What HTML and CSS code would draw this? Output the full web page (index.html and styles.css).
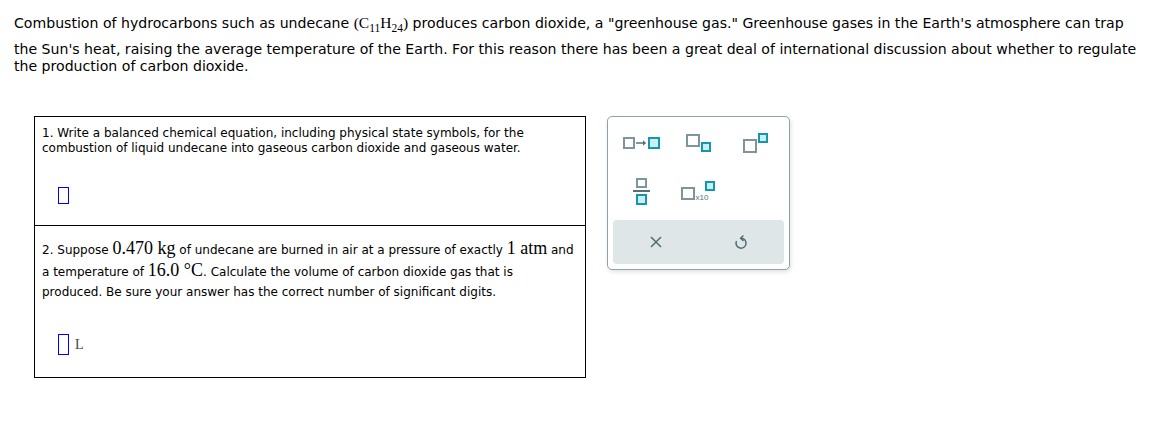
FILE: index.html
```html
<!DOCTYPE html>
<html>
<head>
<meta charset="utf-8">
<link rel="stylesheet" href="styles.css">
</head>
<body>
<p class="intro">Combustion of hydrocarbons such as undecane <span class="math">(C<sub>11</sub>H<sub>24</sub>)</span> produces carbon dioxide, a "greenhouse gas." Greenhouse gases in the Earth's atmosphere can trap the Sun's heat, raising the average temperature of the Earth. For this reason there has been a great deal of international discussion about whether to regulate the production of carbon dioxide.</p>
<div class="work">
  <div class="qbox">
    <div class="part part1">
      <p class="qtext">1. Write a balanced chemical equation, including physical state symbols, for the combustion of liquid undecane into gaseous carbon dioxide and gaseous water.</p>
      <div class="answer"><span class="input"></span></div>
    </div>
    <div class="part part2">
      <p class="qtext q2">2. Suppose <span class="m first">0.470 kg</span> of undecane are burned in air at a pressure of exactly <span class="m">1 atm</span> and a temperature of <span class="m">16.0 °C</span>. Calculate the volume of carbon dioxide gas that is<br>produced. Be sure your answer has the correct number of significant digits.</p>
      <div class="answer answer2"><span class="input tall"></span><span class="unit">L</span></div>
    </div>
  </div>
  <div class="palette">
    <div class="tools">
      <div class="tool">
        <svg width="37" height="12" viewBox="0 0 37 12"><rect x="1" y="1" width="10" height="10" fill="#fff" stroke="#7d959c" stroke-width="2"/><path d="M13 6h8" stroke="#56707a" stroke-width="1.5"/><path d="M20 3.3l3.2 2.7-3.2 2.7z" fill="#56707a"/><rect x="26" y="1" width="10" height="10" fill="#c9eef4" stroke="#1497ad" stroke-width="2"/></svg>
      </div>
      <div class="tool">
        <svg width="25" height="18" viewBox="0 0 25 18"><rect x="1" y="1" width="12" height="11" fill="#fff" stroke="#7d959c" stroke-width="2"/><rect x="16" y="9" width="8" height="8" fill="#c9eef4" stroke="#1497ad" stroke-width="2"/></svg>
      </div>
      <div class="tool">
        <svg width="25" height="20" viewBox="0 0 25 20"><rect x="1" y="7" width="12" height="12" fill="#fff" stroke="#7d959c" stroke-width="2"/><rect x="16" y="1" width="8" height="8" fill="#c9eef4" stroke="#1497ad" stroke-width="2"/></svg>
      </div>
      <div class="tool">
        <svg width="17" height="27" viewBox="0 0 17 27"><rect x="4" y="1" width="9" height="8" fill="#fff" stroke="#7d959c" stroke-width="2"/><path d="M0 13h17" stroke="#56707a" stroke-width="2"/><rect x="4" y="17" width="9" height="9" fill="#c9eef4" stroke="#1497ad" stroke-width="2"/></svg>
      </div>
      <div class="tool">
        <svg width="35" height="20" viewBox="0 0 35 20"><rect x="1" y="7" width="12" height="11" fill="#fff" stroke="#7d959c" stroke-width="2"/><text x="14.5" y="19" font-family="Liberation Sans, Arial, sans-serif" font-size="8" fill="#56707a">x10</text><rect x="25" y="1" width="8" height="8" fill="#c9eef4" stroke="#1497ad" stroke-width="2"/></svg>
      </div>
      <div class="tool"></div>
    </div>
    <div class="actions">
      <div class="action">
        <svg width="12" height="12" viewBox="0 0 12 12"><path d="M1 1L11 11M11 1L1 11" stroke="#4e6d76" stroke-width="1.5" fill="none"/></svg>
      </div>
      <div class="action">
        <svg width="14" height="15" viewBox="0 0 14 15"><path d="M7 3.2A5 5 0 1 1 2.3 6.6" stroke="#4e6d76" stroke-width="1.5" fill="none" stroke-linecap="round"/><path d="M9 1L6.6 3.2 9 5.4" stroke="#4e6d76" stroke-width="1.5" fill="none" stroke-linecap="round" stroke-linejoin="round"/></svg>
      </div>
    </div>
  </div>
</div>
</body>
</html>
```
FILE: styles.css
```css
html, body {
  margin: 0;
  padding: 0;
  background: #fff;
}
body {
  font-family: "DejaVu Sans", Verdana, sans-serif;
  color: #000;
}
.intro {
  margin: 0;
  padding: 15px 0 0 14px;
  width: 1130px;
  font-size: 14.1px;
  line-height: 17px;
}
.math {
  font-family: "Liberation Serif", "Times New Roman", serif;
  font-size: 15.5px;
  display: inline-block;
  line-height: 15px;
  vertical-align: baseline;
  padding: 0 0 11px;
}
.math sub {
  font-size: 11.5px;
  vertical-align: -4px;
  line-height: 0;
}
.work {
  display: flex;
  align-items: flex-start;
  gap: 21px;
  margin: 41px 0 0 34px;
}
.qbox {
  width: 550px;
  border: 1px solid #000;
}
.part {
  padding: 0 7px;
}
.part1 {
  padding-top: 9px;
  box-sizing: border-box;
  height: 109px;
  border-bottom: 1px solid #000;
}
.qtext {
  margin: 0;
  font-size: 12px;
  line-height: 15px;
}
.q2 {
  line-height: 20px;
}
.m {
  font-family: "Liberation Serif", "Times New Roman", serif;
  font-size: 18px;
  line-height: 16px;
  display: inline-block;
}
.m.first {
  padding-bottom: 6px;
}
.part2 {
  padding-top: 14px;
  height: 151px;
  box-sizing: border-box;
}
.answer {
  display: flex;
  align-items: center;
  margin: 31px 0 0 16px;
}
.answer2 {
  margin-top: 32px;
}
.input {
  display: block;
  width: 9px;
  height: 15px;
  border: 1px solid #0000ff;
}
.input.tall {
  height: 19px;
}
.unit {
  font-family: "Liberation Serif", "Times New Roman", serif;
  font-size: 14px;
  color: #444;
  margin-left: 6px;
}
.palette {
  width: 171px;
  padding: 5px;
  border: 1px solid #8ea3a9;
  border-radius: 5px;
  box-shadow: 1px 2px 4px rgba(0, 0, 0, 0.12);
  background: #fff;
}
.tools {
  display: grid;
  grid-template-columns: repeat(3, 1fr);
  grid-template-rows: 41px 46px;
  row-gap: 5px;
}
.tool {
  display: flex;
  align-items: center;
  justify-content: center;
}
.actions {
  display: flex;
  margin-top: 6px;
  height: 44px;
  background: #dfe6e8;
  border-radius: 4px;
}
.action {
  flex: 1;
  display: flex;
  align-items: center;
  justify-content: center;
}
```
